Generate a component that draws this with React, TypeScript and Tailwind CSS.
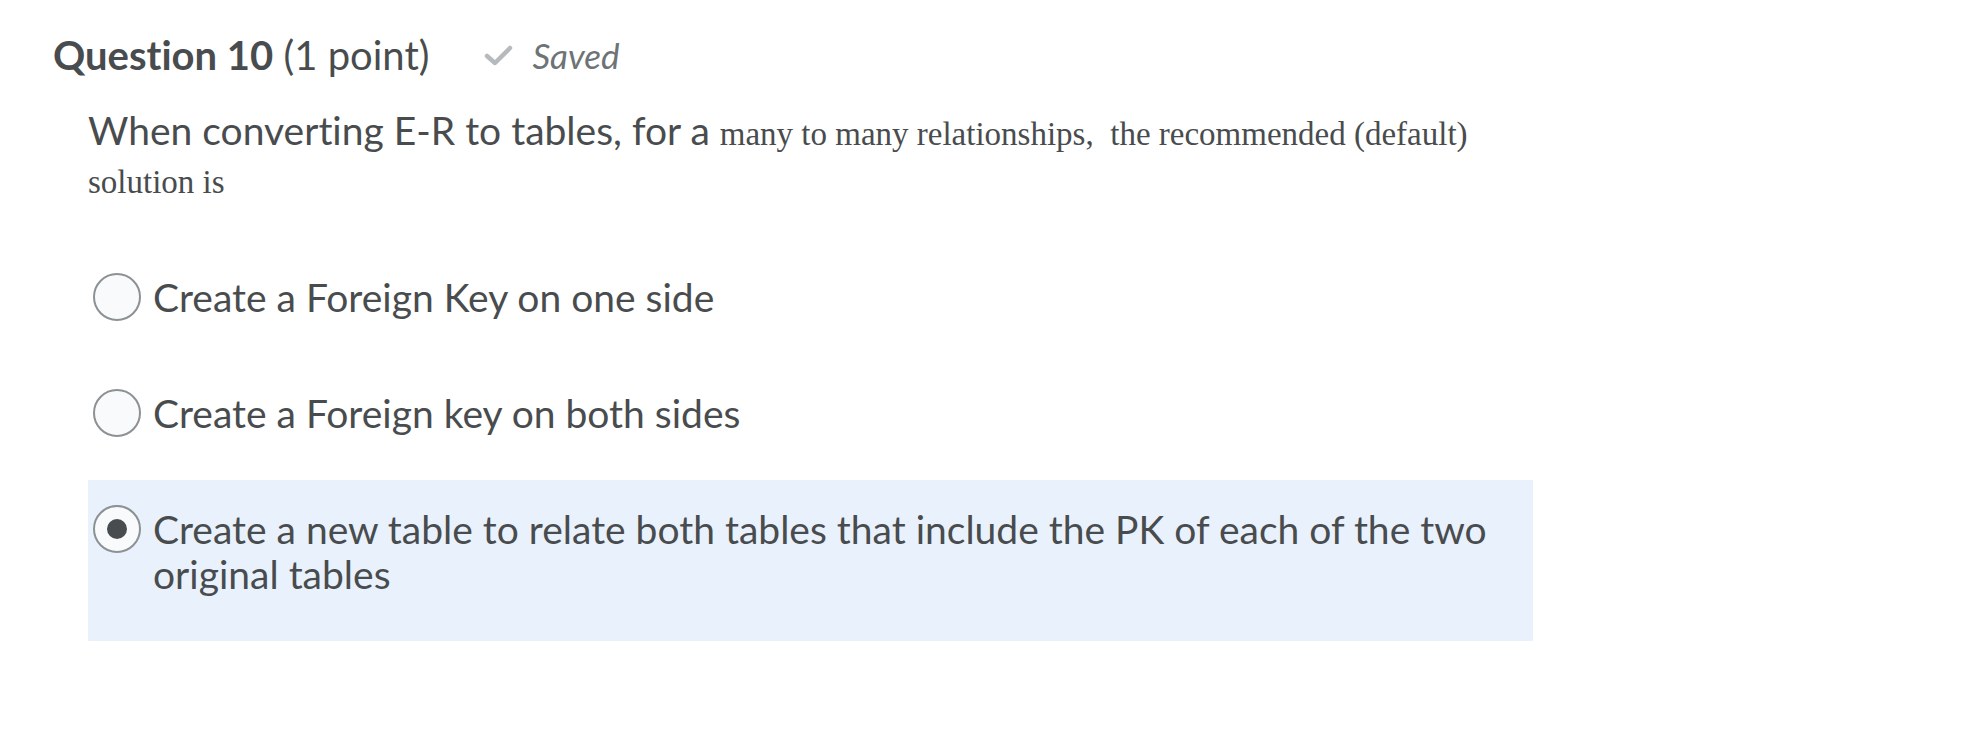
import React from "react";

const options = [
  { id: "a", label: "Create a Foreign Key on one side" },
  { id: "b", label: "Create a Foreign key on both sides" },
  { id: "c", label: "Create a new table to relate both tables that include the PK of each of the two original tables" },
];

const Radio = ({ checked }: { checked: boolean }) => (
  <div className="h-[45px] flex items-center shrink-0">
    <div className="w-[48px] h-[48px] rounded-full border-2 border-[#8c9194] bg-[#f9fafc] flex items-center justify-center shrink-0">
      {checked && <div className="w-[20px] h-[20px] rounded-full bg-[#494c4e]" />}
    </div>
  </div>
);

export default function App() {
  const selected = "c";
  return (
    <div className="min-h-[738px] bg-white font-['Lato','Noto_Sans',sans-serif] text-[#494c4e] [font-variant-ligatures:none]">
      <div className="pl-[53px] pt-[29px] flex items-center">
        <h2 className="text-[40px] leading-[52px]">
          <span className="font-bold">Question 10</span> <span>(1 point)</span>
        </h2>
        <div className="ml-[55px] flex items-center gap-[19px]">
          <svg width="29" height="21" viewBox="0 0 29 21" fill="none">
            <path d="M3 11 L11 18 L26 3" stroke="#b6babd" strokeWidth="4.5" strokeLinecap="round" strokeLinejoin="round" />
          </svg>
          <span className="italic text-[35px] text-[#6e7376]">Saved</span>
        </div>
      </div>

      <div className="pl-[88px]">
        <p className="mt-[26px] text-[39px] leading-[44px] w-[1400px]">
          When converting E-R to tables, for a{" "}
          <span className="font-['Liberation_Serif','Times_New_Roman',serif] text-[33px]">
            many to many relationships,&nbsp; the recommended (default) solution is
          </span>
        </p>

        <div className="mt-[44px] flex flex-col w-[1445px]">
          {options.map((o) => (
            <label
              key={o.id}
              className={`flex items-start gap-[12px] pl-[5px] pr-[20px] pt-[27px] pb-[44px] ${
                o.id === selected ? "bg-[#e9f2fc]" : ""
              }`}
            >
              <Radio checked={o.id === selected} />
              <span className="text-[39px] leading-[45px]">{o.label}</span>
            </label>
          ))}
        </div>
      </div>
    </div>
  );
}
